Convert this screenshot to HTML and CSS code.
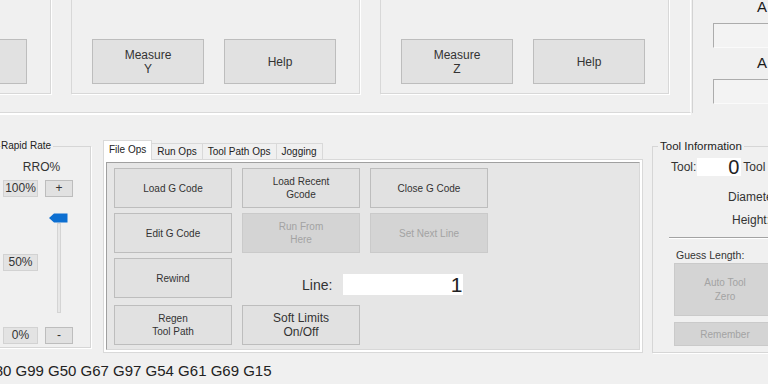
FILE: index.html
```html
<!DOCTYPE html>
<html lang="en">
<head>
  <meta charset="UTF-8">
  <meta name="viewport" content="width=device-width, initial-scale=1.0">
  <title>Mach4 - File Ops</title>
  <link rel="stylesheet" href="styles.css">
</head>
<body>
<div class="top">
  <div class="top-main">
    <div class="probe-row">
      <div class="probe-panel">
        <button class="btn btn-big">Measure<br>X</button>
        <button class="btn btn-big">Help</button>
      </div>
      <div class="probe-panel">
        <button class="btn btn-big">Measure<br>Y</button>
        <button class="btn btn-big">Help</button>
      </div>
      <div class="probe-panel">
        <button class="btn btn-big">Measure<br>Z</button>
        <button class="btn btn-big">Help</button>
      </div>
    </div>
  </div>
  <div class="top-side">
    <div class="axis-label">A</div>
    <div class="axis-box"></div>
    <div class="axis-label">A</div>
    <div class="axis-box"></div>
  </div>
</div>

<div class="bottom">
  <fieldset class="group rapid">
    <legend>Rapid Rate</legend>
    <div class="rro-title">RRO%</div>
    <div class="rro-grid">
      <div class="pct">100%</div>
      <button class="btn btn-small">+</button>
      <div class="pct pct-mid">50%</div>
      <div class="slider">
        <svg class="thumb" width="19" height="10" viewBox="0 0 19 10">
          <polygon points="0,5 5,0.5 18.5,0.5 18.5,9.5 5,9.5" fill="#0c6fd1"/>
        </svg>
        <div class="track"></div>
      </div>
      <div class="pct">0%</div>
      <button class="btn btn-small">-</button>
    </div>
  </fieldset>

  <div class="tabs">
    <div class="tab-row">
      <div class="tab active">File Ops</div>
      <div class="tab">Run Ops</div>
      <div class="tab">Tool Path Ops</div>
      <div class="tab">Jogging</div>
    </div>
    <div class="tab-page">
      <div class="tab-body">
        <button class="btn">Load G Code</button>
        <button class="btn">Load Recent<br>Gcode</button>
        <button class="btn">Close G Code</button>

        <button class="btn">Edit G Code</button>
        <button class="btn" disabled>Run From<br>Here</button>
        <button class="btn" disabled>Set Next Line</button>

        <button class="btn btn-row3">Rewind</button>
        <div class="line-row">
          <span class="line-label">Line:</span>
          <div class="line-value">1</div>
        </div>

        <button class="btn">Regen<br>Tool Path</button>
        <button class="btn btn-soft">Soft Limits<br>On/Off</button>
      </div>
    </div>
  </div>

  <fieldset class="group tool-info">
    <legend>Tool Information</legend>
    <div class="tool-row">
      <span>Tool:</span>
      <div class="tool-num">0</div>
      <span>Tool Desc</span>
    </div>
    <div class="info-line diam">Diameter:</div>
    <div class="info-line height">Height:</div>
    <div class="sep"></div>
    <div class="info-line guess">Guess Length:</div>
    <button class="btn btn-auto" disabled>Auto Tool<br>Zero</button>
    <button class="btn btn-remember" disabled>Remember</button>
  </fieldset>
</div>

<div class="gcode">G80 G99 G50 G67 G97 G54 G61 G69 G15</div>
</body>
</html>
```

FILE: styles.css
```css
* {
  box-sizing: border-box;
}
body {
  margin: 0;
  width: 768px;
  height: 384px;
  overflow: hidden;
  background: #f0f0f0;
  color: #333;
  font-family: "Liberation Sans", Arial, sans-serif;
}

/* buttons */
.btn {
  margin: 0;
  padding: 0;
  font-family: inherit;
  font-size: 10px;
  line-height: 13px;
  color: #333;
  background: #e1e1e1;
  border: 1px solid #bdbdbd;
  cursor: pointer;
}
.btn:disabled {
  background: #d4d4d4;
  border-color: #cacaca;
  color: #a3a3a3;
  cursor: default;
}
.btn-big {
  flex: none;
  width: 112px;
  height: 45px;
  font-size: 12px;
  line-height: 14px;
}
.btn-small {
  font-size: 12px;
  line-height: 15px;
}

/* top strip */
.top {
  display: flex;
  height: 115px;
}
.top-main {
  flex: none;
  width: 691px;
  height: 113px;
  overflow: hidden;
  border-right: 1px solid #fff;
  border-bottom: 1px solid #d9d9d9;
  box-shadow: 0 2px 0 #fff;
}
.probe-row {
  display: flex;
  gap: 20px;
  margin-left: -238px;
  margin-top: -7px;
}
.probe-panel {
  flex: none;
  width: 289px;
  height: 101px;
  display: flex;
  align-items: flex-end;
  gap: 20px;
  padding: 0 0 9px 20px;
  border: 1px solid #d8d8d8;
  box-shadow: 1px 1px 0 #fff;
}
.top-side {
  flex: 1;
  height: 113px;
  margin-left: 1px;
  padding-left: 20px;
  border-left: 1px solid #d3d3d3;
  overflow: hidden;
}
.axis-label {
  margin-top: -4px;
  padding-left: 44px;
  font-size: 15px;
  line-height: 22px;
  color: #1a1a1a;
  white-space: nowrap;
}
.axis-label + .axis-box + .axis-label {
  margin-top: 0;
}
.axis-box {
  width: 80px;
  height: 25px;
  margin: 5px 0 4px;
  background: #f3f3f3;
  border: 1px solid;
  border-color: #acacac #fafafa #fafafa #acacac;
}

/* lower area */
.bottom {
  display: flex;
  align-items: flex-start;
  height: 247px;
}
.group {
  margin: 24px 0 0;
  padding: 0;
  border: 1px solid #d6d6d6;
  box-shadow: 1px 1px 0 #fff;
}
.group legend {
  padding: 0 2px;
  font-size: 11px;
  line-height: 14px;
  color: #222;
}

/* rapid rate */
.rapid {
  flex: none;
  width: 99px;
  margin-left: -8px;
  padding: 7px 0 3px 10px;
}
.rapid legend {
  margin-left: -2px;
  padding-left: 0;
  font-size: 10px;
}
.rro-title {
  margin-left: -10px;
  text-align: center;
  font-size: 12px;
  line-height: 14px;
  margin-bottom: 6px;
}
.rro-grid {
  display: grid;
  grid-template-columns: 35px 28px;
  grid-template-rows: 17px 130px 17px;
  column-gap: 7px;
}
.pct {
  background: #e3e3e3;
  border: 1px solid #d2d2d2;
  text-align: center;
  font-size: 12px;
  line-height: 15px;
}
.pct-mid {
  align-self: center;
}
.slider {
  display: flex;
  flex-direction: column;
  align-items: center;
  padding-top: 16px;
}
.thumb {
  display: block;
  margin-left: -1px;
}
.track {
  width: 4px;
  height: 90px;
  background: #e7e7e7;
  border: 1px solid #d4d4d4;
}

/* tabs */
.tabs {
  flex: none;
  width: 540px;
  margin: 25px 0 0 12px;
}
.tab-row {
  display: flex;
  align-items: flex-end;
  height: 19px;
}
.tab {
  height: 16px;
  margin-right: -1px;
  padding: 0 5px;
  font-size: 10px;
  line-height: 15px;
  color: #222;
  background: #f0f0f0;
  border: 1px solid #d9d9d9;
  border-bottom: none;
}
.tab.active {
  position: relative;
  z-index: 1;
  height: 20px;
  margin-bottom: -1px;
  line-height: 18px;
  background: #fff;
}
.tab-page {
  height: 194px;
  padding: 2px;
  background: #fff;
  border: 1px solid #d9d9d9;
}
.tab-body {
  height: 188px;
  display: grid;
  grid-template-columns: repeat(3, 118px);
  grid-template-rows: 40px 40px 42px 40px;
  column-gap: 10px;
  row-gap: 5px;
  align-items: start;
  padding: 5px 0 0 7px;
  background: #e6e6e6;
  border: 1px solid;
  border-color: #a0a0a0 #d8d8d8 #d8d8d8 #a0a0a0;
}
.tab-body .btn {
  height: 40px;
}
.btn-soft {
  font-size: 12px;
  line-height: 14px;
}
.line-row {
  grid-column: 2 / 4;
  align-self: end;
  display: flex;
  align-items: center;
  gap: 11px;
  margin-bottom: 5px;
  padding-left: 60px;
}
.line-label {
  font-size: 14px;
  color: #333;
}
.line-value {
  width: 120px;
  height: 21px;
  padding-right: 1px;
  background: #fff;
  text-align: right;
  font-size: 21px;
  line-height: 22px;
  color: #222;
}

/* tool information */
.tool-info {
  flex: none;
  width: 150px;
  margin-left: 9px;
  padding: 5px 0 6px 16px;
  display: flex;
  flex-direction: column;
  align-items: flex-start;
}
.tool-info legend {
  margin-left: -11px;
  font-size: 11.5px;
}
.tool-row {
  display: flex;
  align-items: center;
  height: 18px;
  margin-left: 2px;
  font-size: 12px;
  white-space: nowrap;
}
.tool-num {
  width: 44px;
  height: 18px;
  margin: 0 2px 0 1px;
  padding-right: 2px;
  background: #fff;
  text-align: right;
  font-size: 20px;
  line-height: 19px;
  color: #222;
}
.info-line {
  font-size: 12px;
  line-height: 16px;
  white-space: nowrap;
}
.diam {
  margin: 13px 0 0 59px;
}
.height {
  margin: 7px 0 0 63px;
}
.sep {
  width: 130px;
  margin-top: 9px;
  border-top: 1px solid #a3a3a3;
  border-bottom: 1px solid #fff;
}
.guess {
  margin: 8px 0 0 7px;
  font-size: 10.5px;
}
.btn-auto {
  width: 102px;
  height: 53px;
  margin-left: 5px;
  line-height: 14px;
}
.btn-remember {
  width: 102px;
  height: 24px;
  margin: 6px 0 0 5px;
}

/* modal codes */
.gcode {
  margin-left: -17px;
  font-size: 15px;
  line-height: 18px;
  color: #222;
  white-space: nowrap;
}
```
